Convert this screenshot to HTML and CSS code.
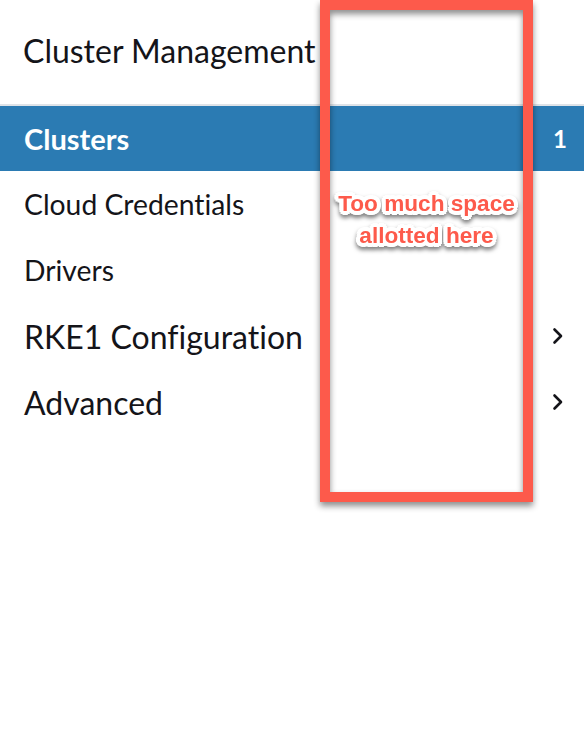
FILE: index.html
```html
<!DOCTYPE html>
<html>
<head>
<meta charset="utf-8">
<link rel="stylesheet" href="styles.css">
</head>
<body>
<div class="page">
  <div class="header">Cluster Management</div>
  <nav class="nav">
    <div class="row active"><span class="label">Clusters</span><span class="count">1</span></div>
    <div class="row"><span class="label">Cloud Credentials</span></div>
    <div class="row"><span class="label">Drivers</span></div>
    <div class="row group"><span class="label">RKE1 Configuration</span>
      <svg class="chev" viewBox="0 0 12 18" width="12" height="18"><path d="M2.5 2.5 L9 9 L2.5 15.5" fill="none" stroke="#141419" stroke-width="2.6" stroke-linecap="round" stroke-linejoin="round"/></svg>
    </div>
    <div class="row group"><span class="label">Advanced</span>
      <svg class="chev" viewBox="0 0 12 18" width="12" height="18"><path d="M2.5 2.5 L9 9 L2.5 15.5" fill="none" stroke="#141419" stroke-width="2.6" stroke-linecap="round" stroke-linejoin="round"/></svg>
    </div>
  </nav>
  <div class="callout"></div>
  <div class="note">Too much space<br>allotted here</div>
</div>
</body>
</html>
```
FILE: styles.css
```css
html, body {
  margin: 0;
  padding: 0;
  background: #fff;
}
body {
  font-family: Lato, "Noto Sans", sans-serif;
  color: #141419;
  font-variant-ligatures: no-common-ligatures;
}
.page {
  position: relative;
  width: 584px;
  height: 756px;
  overflow: hidden;
}
.header {
  height: 104px;
  display: flex;
  align-items: center;
  padding-left: 23px;
  padding-bottom: 4px;
  font-size: 32px;
  box-sizing: border-box;
}
.nav {
  border-top: 2px solid #dfe3e8;
}
.row {
  height: 66px;
  display: flex;
  align-items: center;
  justify-content: space-between;
  padding: 0 17px 0 24px;
  box-sizing: border-box;
  font-size: 28.3px;
}
.row.active {
  background: #2b7bb3;
  color: #fff;
  font-weight: bold;
  font-size: 29px;
  height: 65px;
}
.row.group {
  font-size: 32px;
  padding-right: 20px;
}
.count {
  font-size: 24px;
  font-weight: bold;
}
.chev {
  display: block;
}
.callout {
  position: absolute;
  left: 320px;
  top: 0;
  width: 213px;
  height: 502px;
  box-sizing: border-box;
  border: 10px solid #fd5a4b;
  filter: drop-shadow(0 4px 3px rgba(0, 0, 0, 0.45));
}
.note {
  position: absolute;
  left: 320px;
  width: 213px;
  top: 188px;
  text-align: center;
  font-family: "Liberation Sans", Arial, sans-serif;
  font-weight: bold;
  font-size: 22.6px;
  line-height: 32px;
  color: #fd5a4b;
  text-shadow:
    3px 0 0 #fff, -3px 0 0 #fff, 0 3px 0 #fff, 0 -3px 0 #fff,
    2px 2px 0 #fff, -2px 2px 0 #fff, 2px -2px 0 #fff, -2px -2px 0 #fff,
    4px 1px 0 #fff, -4px 1px 0 #fff, 4px -1px 0 #fff, -4px -1px 0 #fff,
    1px 4px 0 #fff, -1px 4px 0 #fff, 1px -4px 0 #fff, -1px -4px 0 #fff,
    3px 3px 0 #fff, -3px 3px 0 #fff, 3px -3px 0 #fff, -3px -3px 0 #fff;
  filter: drop-shadow(0 3px 2px rgba(0, 0, 0, 0.5));
}
```
